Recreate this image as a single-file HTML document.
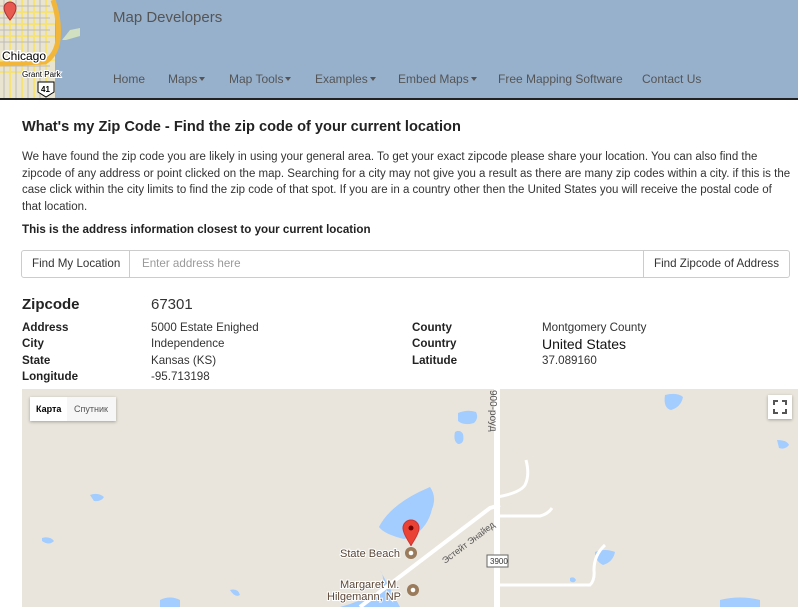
<!DOCTYPE html>
<html><head><meta charset="utf-8"><style>
*{margin:0;padding:0;box-sizing:border-box}
body{width:798px;height:607px;overflow:hidden;font-family:"Liberation Sans",Arial,sans-serif;color:#333;background:#fff;position:relative}
.hdr{position:absolute;left:0;top:0;width:798px;height:100px;background:#97b1cc;border-bottom:2px solid #222}
.brand{position:absolute;left:113px;top:9px;font-size:15px;color:#555}
.nav{position:absolute;top:72px;font-size:12px;color:#555}
.car{display:inline-block;border-top:4px solid #555;border-left:3px solid transparent;border-right:3px solid transparent;vertical-align:2px;margin-left:2px}
.a{position:absolute}
h1{position:absolute;left:22px;top:119px;font-size:14.6px;font-weight:bold;color:#222}
.p{position:absolute;left:22px;top:149px;width:772px;font-size:11.5px;line-height:16.5px;color:#333}
.b{font-weight:bold;font-size:11.6px;color:#222}
.grp{position:absolute;left:21px;top:250px;width:769px;height:28px;border:1px solid #ccc;border-radius:3px;font-size:11.6px}
.lbl{position:absolute;font-size:11.6px;font-weight:bold;color:#222}
.val{position:absolute;font-size:11.6px;color:#333}
.map{position:absolute;left:22px;top:389px;width:776px;height:218px;background:#e9e5dc;overflow:hidden}
</style></head><body>
<div class="hdr">
<svg class="a" style="left:0;top:0" width="100" height="98" viewBox="0 0 100 98">
<rect width="100" height="98" fill="#97b1cc"/>
<path d="M0 0H55V98H0Z" fill="#e8e4cf"/>
<g stroke="#f5e37a" stroke-width="2">
<path d="M0 12H55M0 24H55M0 36H55M0 60H55M0 72H55M10 0V98M22 0V98M34 0V98M46 0V98"/></g>
<g stroke="#bbb" stroke-width="1"><path d="M0 6H50M0 18H50M0 30H50M0 42H50M0 66H50M4 0V98M16 0V98M28 0V98M40 0V98"/></g>
<path d="M53 0Q60 20 58 40Q56 55 45 62L0 64" stroke="#f2b63a" stroke-width="5" fill="none"/>
<path d="M62 40L70 30L80 28V36L66 40Z" fill="#d0e0c0"/>
<path d="M10 2a6 6 0 0 1 6 6c0 5-6 12-6 12s-6-7-6-12a6 6 0 0 1 6-6z" fill="#e85a4f" stroke="#a33"/>
<text x="2" y="60" font-size="12" font-family="Liberation Sans" fill="#000" stroke="#fff" stroke-width="3" paint-order="stroke">Chicago</text>
<text x="22" y="77" font-size="8" font-family="Liberation Sans" fill="#000" stroke="#fff" stroke-width="2" paint-order="stroke">Grant Park</text>
<path d="M38 82h16v10l-8 5-8-5z" fill="#fff" stroke="#000"/>
<text x="41" y="92" font-size="8" font-weight="bold" font-family="Liberation Sans" fill="#000">41</text>
</svg>
<div class="brand">Map Developers</div>
<div class="nav" style="left:113px">Home</div>
<div class="nav" style="left:168px">Maps<span class="car"></span></div>
<div class="nav" style="left:229px">Map Tools<span class="car"></span></div>
<div class="nav" style="left:315px">Examples<span class="car"></span></div>
<div class="nav" style="left:398px">Embed Maps<span class="car"></span></div>
<div class="nav" style="left:498px">Free Mapping Software</div>
<div class="nav" style="left:642px">Contact Us</div>
</div>
<h1>What's my Zip Code - Find the zip code of your current location</h1>
<div class="p">We have found the zip code you are likely in using your general area. To get your exact zipcode please share your location. You can also find the zipcode of any address or point clicked on the map. Searching for a city may not give you a result as there are many zip codes within a city. if this is the case click within the city limits to find the zip code of that spot. If you are in a country other then the United States you will receive the postal code of that location.</div>
<div class="a b" style="left:22px;top:223px">This is the address information closest to your current location</div>
<div class="grp">
<div class="a" style="left:0;top:0;width:108px;height:26px;border-right:1px solid #ccc;padding:6px 0 0 10px;color:#333">Find My Location</div>
<div class="a" style="left:120px;top:6px;color:#999">Enter address here</div>
<div class="a" style="right:0;top:0;width:146px;height:26px;border-left:1px solid #ccc;padding:6px 0 0 10px;color:#333">Find Zipcode of Address</div>
</div>
<div class="lbl" style="left:22px;top:296px;font-size:15px">Zipcode</div>
<div class="val" style="left:151px;top:296px;font-size:15px">67301</div>
<div class="lbl" style="left:22px;top:321px">Address</div><div class="val" style="left:151px;top:321px">5000 Estate Enighed</div>
<div class="lbl" style="left:22px;top:337px">City</div><div class="val" style="left:151px;top:337px">Independence</div>
<div class="lbl" style="left:22px;top:354px">State</div><div class="val" style="left:151px;top:354px">Kansas (KS)</div>
<div class="lbl" style="left:22px;top:370px">Longitude</div><div class="val" style="left:151px;top:370px">-95.713198</div>
<div class="lbl" style="left:412px;top:321px">County</div><div class="val" style="left:542px;top:321px">Montgomery County</div>
<div class="lbl" style="left:412px;top:337px">Country</div><div class="val" style="left:542px;top:336px;font-size:14px;color:#111">United States</div>
<div class="lbl" style="left:412px;top:354px">Latitude</div><div class="val" style="left:542px;top:354px">37.089160</div>
<div class="map">
<svg width="776" height="218" viewBox="22 389 776 218" style="position:absolute;left:0;top:0">
<g fill="#a3ccff">
<path d="M458 413q10-4 18-1q3 6-2 11q-10 3-16-2z"/>
<path d="M455 432q5-3 8 2q2 10-5 10q-5-3-3-12z"/>
<path d="M430 487q7 10 2 22q-4 18-20 28l-8 2q-20-5-25-12q10-20 40-35z"/>
<path d="M665 395q12-3 18 2q-2 10-12 13q-8-2-6-15z"/>
<path d="M90 495q8-3 14 2q-3 5-10 4z"/>
<path d="M42 538q8-2 12 3q-5 5-12 0z"/>
<path d="M777 440q10 0 12 5q-4 5-10 3z"/>
<path d="M595 552q10-4 20 0q-2 10-12 13q-8-4-8-13z"/>
<path d="M570 578q4-2 6 2q-2 4-6 1z"/>
<path d="M380 570q6 8 0 20q-20 12-40 17h60z"/>
<path d="M720 600q20-5 40 0v7h-40z"/>
<path d="M160 600q10-5 20 0v7h-20z"/>
<path d="M230 590q8-2 10 5q-5 3-10-5z"/>
</g>
<g stroke="#fff" fill="none">
<path d="M497 389V607" stroke-width="6"/>
<path d="M360 607L490 508L500 505" stroke-width="4"/>
<path d="M497 497Q520 493 525 485Q530 475 526 460" stroke-width="3"/>
<path d="M500 516H540Q548 514 552 508" stroke-width="3"/>
<path d="M500 585H590Q595 580 594 570Q594 555 605 545" stroke-width="3"/>
</g>
<rect x="487" y="555" width="21" height="12" fill="#fff" stroke="#666"/>
<text x="490" y="564" font-size="8" font-family="Liberation Sans" fill="#333">3900</text>
<text transform="translate(490,390) rotate(90)" font-size="10" font-family="Liberation Sans" fill="#555">900-роуд</text>
<text transform="translate(445,564) rotate(-37)" font-size="9" font-family="Liberation Sans" fill="#555">Эстейт Энайед</text>
<circle cx="411" cy="553" r="6" fill="#9a7b5b"/><circle cx="411" cy="553" r="2.3" fill="#fff"/>
<circle cx="413" cy="590" r="6" fill="#9a7b5b"/><circle cx="413" cy="590" r="2.3" fill="#fff"/>
<path d="M411 520a8 8 0 0 1 8 8c0 7-8 16-8 18c0-2-8-11-8-18a8 8 0 0 1 8-8z" fill="#ea4335" stroke="#c33"/>
<circle cx="411" cy="528" r="2.5" fill="#700"/>
<text x="340" y="557" font-size="11" font-family="Liberation Sans" fill="#5b4636" stroke="#fff" stroke-width="2" paint-order="stroke">State Beach</text>
<text x="340" y="588" font-size="11" font-family="Liberation Sans" fill="#5b4636" stroke="#fff" stroke-width="2" paint-order="stroke">Margaret M.</text>
<text x="327" y="600" font-size="11" font-family="Liberation Sans" fill="#5b4636" stroke="#fff" stroke-width="2" paint-order="stroke">Hilgemann, NP</text>
</svg>
<div class="a" style="left:8px;top:8px;width:86px;height:24px;background:#fff;box-shadow:0 1px 3px rgba(0,0,0,.3);font-size:9px">
<div class="a" style="left:6px;top:7px;font-weight:bold;color:#000">Карта</div>
<div class="a" style="left:37px;top:0;width:49px;height:24px;background:#f6f6f6;padding:7px 0 0 7px;color:#555">Спутник</div>
</div>
<div class="a" style="left:746px;top:6px;width:24px;height:24px;background:#fff;box-shadow:0 1px 3px rgba(0,0,0,.3)">
<svg width="24" height="24"><path d="M6 10V6h4M14 6h4v4M18 14v4h-4M10 18H6v-4" stroke="#555" stroke-width="2" fill="none"/></svg>
</div>
</div>
</body></html>
